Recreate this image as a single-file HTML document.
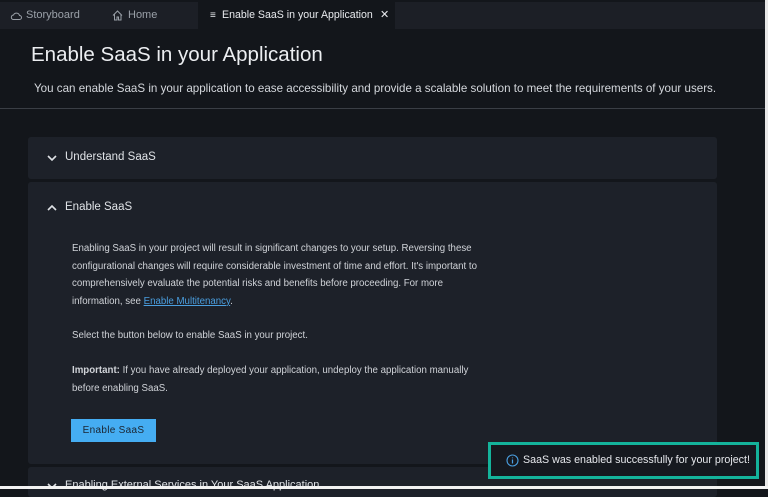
<!DOCTYPE html>
<html><head><meta charset="utf-8"><style>
*{margin:0;padding:0;box-sizing:border-box}
body{width:768px;height:489px;overflow:hidden;background:#13161b;font-family:"Liberation Sans",sans-serif;color:#e6e8ec;position:relative}
.tabs{position:absolute;left:0;top:2px;width:765px;height:27px;background:#1c1f26}
.tab{position:absolute;top:0;height:27px;font-size:11px;line-height:27px;color:#9aa0a8}
.tab.active{background:#13161b;color:#e8eaee}
.main{position:absolute;left:0;top:29px;width:765px;height:457px;background:#13161b}
h1{position:absolute;left:31px;top:43px;font-size:20.5px;font-weight:normal;color:#eceef1}
.sub{position:absolute;left:34px;top:82px;font-size:11.6px;color:#d4d7dc}
.hr{position:absolute;left:0;top:108px;width:765px;height:1px;background:#3a3e45}
.card{position:absolute;left:28px;width:689px;background:#1d2129;border-radius:3px}
.head{position:absolute;left:37px;font-size:11.5px;color:#dfe2e6}
.p{position:absolute;left:44px;font-size:9.7px;line-height:17.6px;color:#d0d3d8;white-space:nowrap}
a{color:#4a9fe0;text-decoration:underline}
.btn{position:absolute;left:43px;top:237px;width:85px;height:23px;background:#45adf2;color:#1a2430;font-size:10px;line-height:23px;text-align:center;letter-spacing:.3px}
.toast{position:absolute;left:488px;top:442px;width:271px;height:37px;border:3px solid #14b39b;background:#16191f;font-size:10.7px;color:#e6e8ec;line-height:31px;padding-left:32px;white-space:nowrap}
.bottom{position:absolute;left:0;top:486px;width:768px;height:3px;background:#f2f2f2}
.redge{position:absolute;left:765px;top:0;width:3px;height:489px;background:#e8e8e8}
</style></head><body>
<div class="tabs">
 <div class="tab" style="left:8px;width:96px">
  <svg width="12" height="10" style="position:absolute;left:2px;top:9px" viewBox="0 0 12 10" fill="none" stroke="#9aa0a8" stroke-width="1"><path d="M3 8.5h6.5a2 2 0 0 0 0-4A3.2 3.2 0 0 0 3.5 4 2.3 2.3 0 0 0 3 8.5z"/></svg>
  <span style="position:absolute;left:18px">Storyboard</span></div>
 <div class="tab" style="left:104px;width:92px">
  <svg width="11" height="11" style="position:absolute;left:8px;top:8px" viewBox="0 0 11 11" fill="none" stroke="#9aa0a8" stroke-width="1"><path d="M1 5.5L5.5 1 10 5.5M2.5 4.5V10h2.5V7h1.5v3H9V4.5"/></svg>
  <span style="position:absolute;left:24px">Home</span></div>
 <div class="tab active" style="left:198px;width:197px">
  <span style="position:absolute;left:12px;font-size:10px">&#8801;</span>
  <span style="position:absolute;left:24px;font-size:10.6px">Enable SaaS in your Application</span>
  <span style="position:absolute;left:182px">&#10005;</span></div>
</div>
<div class="main"></div>
<h1>Enable SaaS in your Application</h1>
<div class="sub">You can enable SaaS in your application to ease accessibility and provide a scalable solution to meet the requirements of your users.</div>
<div class="hr"></div>
<div class="card" style="top:137px;height:42px">
 <svg width="10" height="7" style="position:absolute;left:19px;top:18px" viewBox="0 0 10 7"><path d="M1 1l4 4 4-4" stroke="#dfe2e6" stroke-width="1.6" fill="none"/></svg>
 <div class="head" style="top:14px">Understand SaaS</div>
</div>
<div class="card" style="top:182px;height:282px">
 <svg width="10" height="7" style="position:absolute;left:19px;top:22px" viewBox="0 0 10 7"><path d="M1 6l4-4 4 4" stroke="#dfe2e6" stroke-width="1.6" fill="none"/></svg>
 <div class="head" style="top:19px">Enable SaaS</div>
 <div class="p" style="top:58px">Enabling SaaS in your project will result in significant changes to your setup. Reversing these<br>configurational changes will require considerable investment of time and effort. It's important to<br>comprehensively evaluate the potential risks and benefits before proceeding. For more<br>information, see <a>Enable Multitenancy</a>.</div>
 <div class="p" style="top:145px">Select the button below to enable SaaS in your project.</div>
 <div class="p" style="top:180px"><b>Important:</b> If you have already deployed your application, undeploy the application manually<br>before enabling SaaS.</div>
 <div class="btn">Enable SaaS</div>
</div>
<div class="card" style="top:467px;height:30px">
 <svg width="10" height="7" style="position:absolute;left:19px;top:16px" viewBox="0 0 10 7"><path d="M1 1l4 4 4-4" stroke="#dfe2e6" stroke-width="1.6" fill="none"/></svg>
 <div class="head" style="top:12px;font-size:11px">Enabling External Services in Your SaaS Application</div>
</div>
<div class="toast">
 <svg width="13" height="13" style="position:absolute;left:15px;top:9px" viewBox="0 0 13 13"><circle cx="6.5" cy="6.5" r="5.5" stroke="#4a9fe0" stroke-width="1.1" fill="none"/><path d="M6.5 5.5v4M6.5 3.5v.8" stroke="#4a9fe0" stroke-width="1.2"/></svg>
 SaaS was enabled successfully for your project!</div>
<div class="redge"></div>
<div class="bottom"></div>
</body></html>
